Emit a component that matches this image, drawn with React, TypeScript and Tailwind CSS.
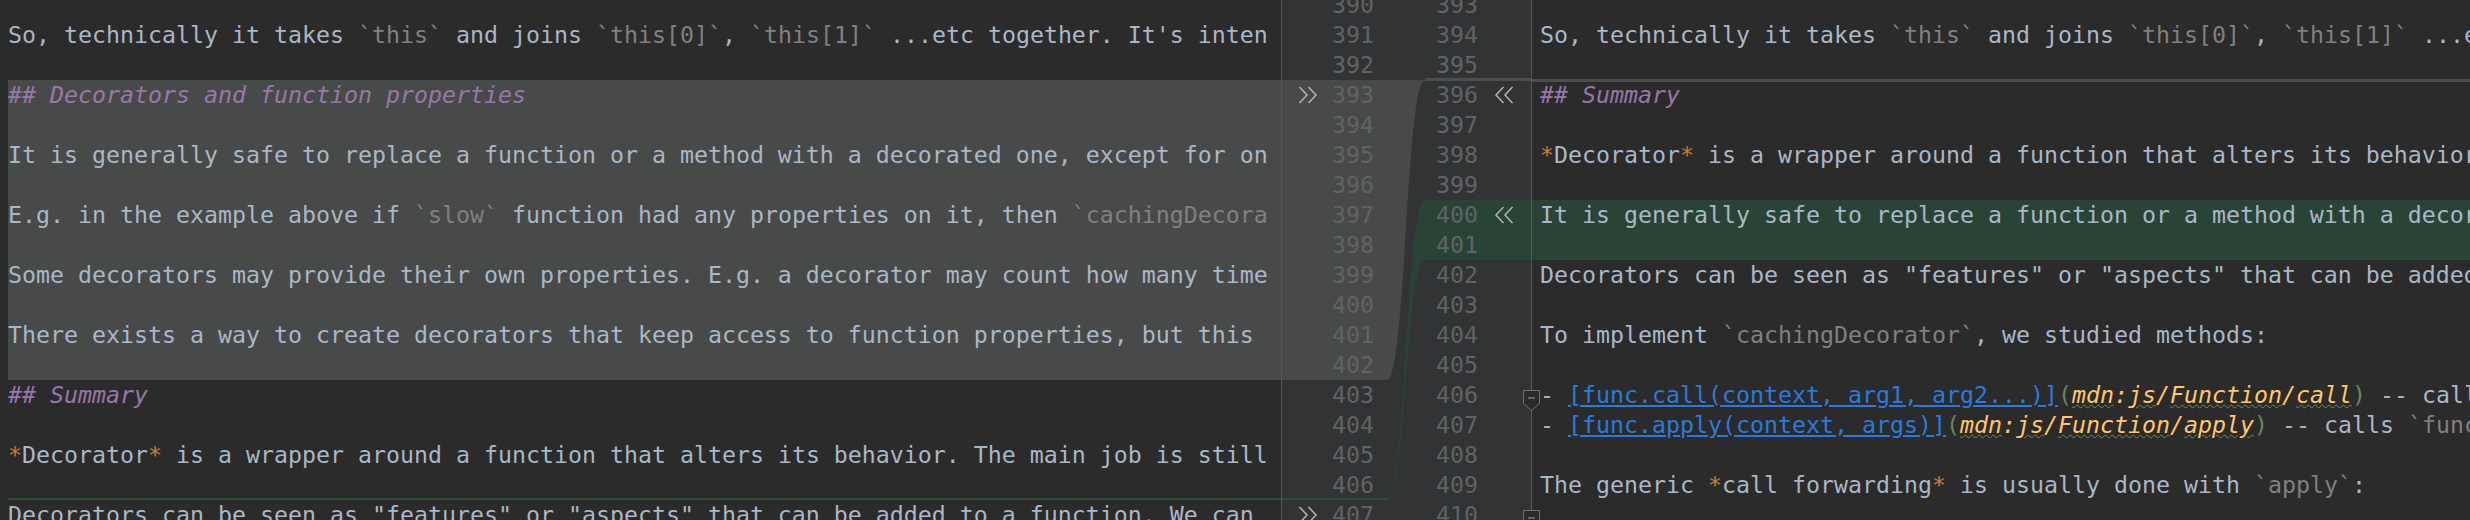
import React from 'react';

type Row = {
  n: number;
  t: string;
  del?: boolean;
  ins?: boolean;
  lineBelow?: boolean;
  lineAbove?: boolean;
  fold?: boolean;
};

const SO_LINE =
  "So, technically it takes `this` and joins `this[0]`, `this[1]` ...etc together. It's intentionally written in a way that allows any array-like `this` (not a coincidence, many methods follow this practice). That's why it also works with `this=arguments`.";
const SAFE_LINE =
  'It is generally safe to replace a function or a method with a decorated one, except for one little thing. If the original function had properties on it, like `func.calledCount` or whatever, then the decorated one will not provide them.';
const DECORATOR_LINE =
  '*Decorator* is a wrapper around a function that alters its behavior. The main job is still carried out by the function.';
const FEATURES_LINE =
  'Decorators can be seen as "features" or "aspects" that can be added to a function. We can add one or add many. And all this without changing its code!';

const leftRows: Row[] = [
  { n: 390, t: '' },
  { n: 391, t: SO_LINE },
  { n: 392, t: '' },
  { n: 393, t: '## Decorators and function properties', del: true },
  { n: 394, t: '', del: true },
  { n: 395, t: SAFE_LINE, del: true },
  { n: 396, t: '', del: true },
  {
    n: 397,
    t: 'E.g. in the example above if `slow` function had any properties on it, then `cachingDecorator(slow)` is a wrapper without them.',
    del: true,
  },
  { n: 398, t: '', del: true },
  {
    n: 399,
    t: 'Some decorators may provide their own properties. E.g. a decorator may count how many times a function was invoked and how much time it took.',
    del: true,
  },
  { n: 400, t: '', del: true },
  {
    n: 401,
    t: 'There exists a way to create decorators that keep access to function properties, but this requires using a special `Proxy` object to wrap a function.',
    del: true,
  },
  { n: 402, t: '', del: true },
  { n: 403, t: '## Summary' },
  { n: 404, t: '' },
  { n: 405, t: DECORATOR_LINE },
  { n: 406, t: '', lineBelow: true },
  { n: 407, t: FEATURES_LINE },
];

const rightRows: Row[] = [
  { n: 393, t: '' },
  { n: 394, t: SO_LINE },
  { n: 395, t: '' },
  { n: 396, t: '## Summary', lineAbove: true },
  { n: 397, t: '' },
  { n: 398, t: DECORATOR_LINE },
  { n: 399, t: '' },
  { n: 400, t: SAFE_LINE, ins: true },
  { n: 401, t: '', ins: true },
  { n: 402, t: FEATURES_LINE },
  { n: 403, t: '' },
  { n: 404, t: 'To implement `cachingDecorator`, we studied methods:' },
  { n: 405, t: '' },
  {
    n: 406,
    t: '- [func.call(context, arg1, arg2...)](mdn:js/Function/call) -- calls `func` with given context and arguments.',
    fold: true,
  },
  {
    n: 407,
    t: '- [func.apply(context, args)](mdn:js/Function/apply) -- calls `func` passing `context` as `this` and array-like `args` into a list of arguments.',
  },
  { n: 408, t: '' },
  { n: 409, t: 'The generic *call forwarding* is usually done with `apply`:' },
  { n: 410, t: '', fold: true },
];

// rows (by index) that carry the merge arrows
const arrowRight = [3, 17];
const arrowLeft = [3, 7];

const Chevrons = ({ dir }: { dir: 'right' | 'left' }) => (
  <svg width="20" height="18" viewBox="0 0 20 18" fill="none" stroke="#b1b3b5" strokeWidth="1.5">
    {dir === 'right' ? (
      <>
        <polyline points="1.5,1 9,9 1.5,17" />
        <polyline points="10.5,1 18,9 10.5,17" />
      </>
    ) : (
      <>
        <polyline points="9.5,1 2,9 9.5,17" />
        <polyline points="18.5,1 11,9 18.5,17" />
      </>
    )}
  </svg>
);

const FoldMarker = () => (
  <svg
    className="absolute left-[-9px] top-[10px]"
    width="17"
    height="21"
    viewBox="0 0 17 21"
  >
    <path d="M0.5 0.5 H16.5 V13.5 L8.5 20.5 L0.5 13.5 Z" fill="#2b2b2b" stroke="#6f7173" />
    <path d="M5 8 H12" stroke="#8a8c8e" strokeWidth="1.2" />
  </svg>
);

const Url = ({ url }: { url: string }) => (
  <span className="italic text-[#ffc66d]">
    {url.split(/([:/])/).map((p, i) =>
      p === ':' || p === '/' ? (
        <span key={i}>{p}</span>
      ) : (
        <span key={i} className="underline decoration-wavy decoration-[#6f8a55] decoration-1">
          {p}
        </span>
      ),
    )}
  </span>
);

// tiny markdown highlighter: headers, `code`, *emphasis*, [links](url)
const Line = ({ text }: { text: string }) => {
  if (text.startsWith('##')) {
    return <span className="italic text-[#9876aa]">{text}</span>;
  }
  const out: React.ReactNode[] = [];
  const re = /`[^`]*`|\[[^\]]*\]\([^)]*\)|\*/g;
  let last = 0;
  let m: RegExpExecArray | null;
  let k = 0;
  while ((m = re.exec(text))) {
    if (m.index > last) out.push(<span key={k++}>{text.slice(last, m.index)}</span>);
    const s = m[0];
    if (s === '*') {
      out.push(
        <span key={k++} className="text-[#cc7832]">
          *
        </span>,
      );
    } else if (s[0] === '`') {
      out.push(
        <span key={k++} className="text-[#808080]">
          {s}
        </span>,
      );
    } else {
      const close = s.indexOf('](');
      out.push(
        <span key={k++} className="text-[#287bde] underline decoration-[#287bde]">
          {s.slice(0, close + 1)}
        </span>,
      );
      out.push(
        <span key={k++} className="text-[#6a8759]">
          (
        </span>,
      );
      out.push(<Url key={k++} url={s.slice(close + 2, -1)} />);
      out.push(
        <span key={k++} className="text-[#6a8759]">
          )
        </span>,
      );
    }
    last = m.index + s.length;
  }
  if (last < text.length) out.push(<span key={k++}>{text.slice(last)}</span>);
  return <>{out}</>;
};

export default function App() {
  return (
    <div className="flex h-[520px] w-[2470px] overflow-hidden bg-[#2b2b2b] font-['DejaVu_Sans_Mono','Liberation_Mono',monospace] text-[23.25px] leading-[30px] text-[#a9b7c6]">
      {/* Left editor (base revision) */}
      <div className="w-[1281px] shrink-0 overflow-hidden pl-[8px]">
        <div className="-mt-[10px]">
          {leftRows.map((r) => (
            <div
              key={r.n}
              className={`h-[30px] ${r.del ? 'bg-[#484a4a]' : ''} ${
                r.lineBelow ? 'shadow-[inset_0_-2px_0_#2d4b3b]' : ''
              }`}
            >
              <div className="w-[1259px] overflow-hidden whitespace-pre">
                <Line text={r.t} />
              </div>
            </div>
          ))}
        </div>
      </div>

      <div className="w-px shrink-0 bg-[#555759]" />

      {/* Middle gutter with line numbers and change connectors */}
      <div className="relative w-[249px] shrink-0 overflow-hidden bg-[#313335]">
        <svg className="absolute inset-0" width="249" height="520">
          <path d="M0 80 H143 C124 80 124 380 105 380 H0 Z" fill="#484a4a" />
          <path d="M143 79.5 H249" stroke="#4b4d4e" strokeWidth="3" />
          <path
            d="M0 498 H105 C124 498 124 200 143 200 H249 V260 H143 C124 260 124 500 105 500 H0 Z"
            fill="#294436"
          />
          <path d="M0 499 H105" stroke="#2d4b3b" strokeWidth="2" />
        </svg>
        <div className="relative -mt-[10px] text-[#606366]">
          {leftRows.map((r, i) => (
            <div key={r.n} className="flex h-[30px] items-center">
              <div className="w-[16px] shrink-0" />
              <div className="flex w-[20px] shrink-0 justify-center">
                {arrowRight.includes(i) && <Chevrons dir="right" />}
              </div>
              <div className="w-[56px] shrink-0 text-right">{r.n}</div>
              <div className="w-[104px] shrink-0 text-right">{rightRows[i].n}</div>
              <div className="w-[16px] shrink-0" />
              <div className="flex w-[20px] shrink-0 justify-center">
                {arrowLeft.includes(i) && <Chevrons dir="left" />}
              </div>
            </div>
          ))}
        </div>
      </div>

      {/* Right editor (current revision) */}
      <div className="min-w-0 flex-1 border-l border-[#555759]">
        <div className="-mt-[10px]">
          {rightRows.map((r) => (
            <div
              key={r.n}
              className={`relative h-[30px] whitespace-pre pl-[8px] ${r.ins ? 'bg-[#294436]' : ''} ${
                r.lineAbove ? 'shadow-[inset_0_2px_0_#4b4d4e,0_-1px_0_#4b4d4e]' : ''
              }`}
            >
              {r.fold && <FoldMarker />}
              <Line text={r.t} />
            </div>
          ))}
        </div>
      </div>
    </div>
  );
}
